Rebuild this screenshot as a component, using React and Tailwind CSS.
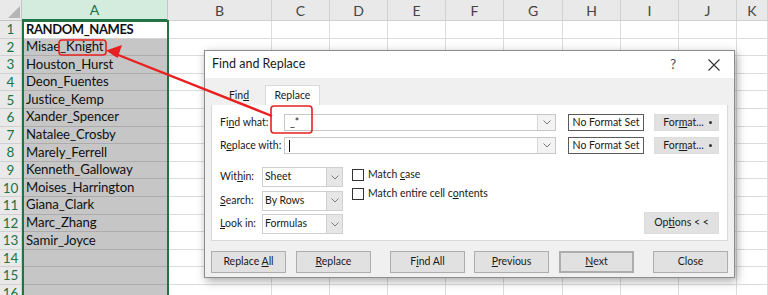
import React from "react";

const cols = ["B", "C", "D", "E", "F", "G", "H", "I", "J", "K"];
const names = [
  "RANDOM_NAMES",
  "Misae_Knight",
  "Houston_Hurst",
  "Deon_Fuentes",
  "Justice_Kemp",
  "Xander_Spencer",
  "Natalee_Crosby",
  "Marely_Ferrell",
  "Kenneth_Galloway",
  "Moises_Harrington",
  "Giana_Clark",
  "Marc_Zhang",
  "Samir_Joyce",
  "",
  "",
  "",
];

const Chevron = () => (
  <svg width="8" height="5" viewBox="0 0 8 5" fill="none">
    <path d="M0.5 0.5 L4 4 L7.5 0.5" stroke="#7a7a7a" strokeWidth="1" />
  </svg>
);

const Btn = ({ children, className = "" }) => (
  <div
    className={`flex items-center justify-center h-[22px] w-[75px] bg-[#e1e1e1] border border-[#adadad] text-[10.5px] text-[#1a1a1a] ${className}`}
  >
    <span>{children}</span>
  </div>
);

const Select = ({ value }) => (
  <div className="flex h-[20px] w-[81px] border border-[#cfcfcf] bg-white">
    <div className="flex-1 flex items-center pl-[2px] text-[10.5px] text-[#1a1a1a]">{value}</div>
    <div className="w-[16px] flex items-center justify-center bg-[#e6e6e6] border-l border-[#cfcfcf]">
      <Chevron />
    </div>
  </div>
);

const Combo = ({ children }) => (
  <div className="flex h-[17px] w-[272px] border border-[#c8c8c8] bg-white">
    <div className="flex-1 flex items-center pl-[3px] text-[10.5px] text-[#1a1a1a]">{children}</div>
    <div className="w-[18px] flex items-center justify-center bg-[#f3f3f3] border-l border-[#d6d6d6]">
      <Chevron />
    </div>
  </div>
);

const FormatRow = () => (
  <>
    <div className="ml-[12px] flex items-center justify-center h-[17px] w-[76px] bg-white border border-[#5a5a5a] text-[10.5px] text-[#1a1a1a]">
      No Format Set
    </div>
    <div className="ml-[10px] relative flex items-center justify-center h-[17px] w-[65px] bg-[#e1e1e1] border border-[#dcdcdc] text-[10.5px] text-[#1a1a1a]">
      <span className="-ml-[6px]">
        For<u>m</u>at...
      </span>
      <span className="absolute right-[6px] top-[6px] w-[3px] h-[3px] bg-[#333] rounded-full" />
    </div>
  </>
);

const Check = ({ children }) => (
  <div className="flex items-center gap-[4px] h-[12px]">
    <div className="w-[12px] h-[12px] border border-[#333] bg-white" />
    <span className="text-[10.5px] text-[#1a1a1a]">{children}</span>
  </div>
);

export default function App() {
  return (
    <div className="relative w-[768px] h-[295px] overflow-hidden bg-white font-['Lato',sans-serif]">
      {/* sheet */}
      <div className="grid grid-cols-[22px_146px_104px_58px_58px_58px_58px_59px_58px_58px_58px_1fr]">
        <div className="relative h-[21px] bg-[#e9e9e9] border-r border-b border-[#c6c6c6]">
          <svg className="absolute left-[8px] top-[6px]" width="12" height="12" viewBox="0 0 12 12">
            <path d="M12 0 L12 12 L0 12 Z" fill="#b5b5b5" />
          </svg>
        </div>
        <div className="h-[21px] flex items-center justify-center bg-[#d3ecdd] border-r border-[#c6c6c6] border-b-2 border-b-[#217346] text-[14px] text-[#217346]">
          A
        </div>
        {cols.map((c) => (
          <div
            key={c}
            className="h-[21px] flex items-center justify-center bg-[#e9e9e9] border-r border-b border-[#d0d0d0] text-[14px] text-[#444]"
          >
            {c}
          </div>
        ))}
        {names.map((n, i) => (
          <React.Fragment key={i}>
            <div className="h-[17.6px] flex items-center justify-center bg-[#e9e9e9] border-r border-b border-[#d0d0d0] text-[13.5px] text-[#217346]">
              {i + 1}
            </div>
            <div
              className={`h-[17.6px] flex items-center pl-[4px] border-b text-[#111] ${
                i === 0
                  ? "bg-white border-[#d4d4d4] font-bold text-[13px] tracking-[-0.4px]"
                  : "bg-[#c6c6c6] border-[#acacac] text-[13.2px] tracking-[-0.1px]"
              }`}
            >
              {n}
            </div>
            {cols.map((c) => (
              <div key={c} className="h-[17.6px] border-r border-b border-[#dcdcdc]" />
            ))}
          </React.Fragment>
        ))}
      </div>

      {/* column A selection */}
      <div className="absolute left-[22px] top-[20px] w-[147px] h-[290px] border-2 border-[#217346]" />

      {/* dialog */}
      <div className="absolute left-[204px] top-[50px] w-[531px] h-[228px] flex flex-col bg-[#f0f0f0] border border-[#8c8c8c] shadow-[2px_3px_9px_rgba(0,0,0,0.35)] font-['Lato',sans-serif]">
        <div className="h-[27px] flex items-center bg-white pl-[7px] pr-[14px]">
          <span className="text-[12.5px] text-[#1a1a1a]">Find and Replace</span>
          <span className="ml-auto text-[13px] text-[#444]">?</span>
          <svg className="ml-[32px]" width="12" height="12" viewBox="0 0 12 12">
            <path d="M0.5 0.5 L11.5 11.5 M11.5 0.5 L0.5 11.5" stroke="#333" strokeWidth="1.1" />
          </svg>
        </div>

        <div className="px-[6px] pt-[7px] flex flex-col">
          <div className="flex h-[20px] items-end">
            <div className="w-[54px] h-[19px] flex items-center justify-center text-[10.5px] text-[#1a1a1a]">
              <span className="ml-[2px]">
                Fin<u>d</u>
              </span>
            </div>
            <div className="w-[55px] h-[20px] flex items-center justify-center bg-white border-x border-t border-[#d9d9d9] text-[10.5px] text-[#1a1a1a]">
              Replace
            </div>
          </div>

          <div className="h-[136px] bg-white border border-[#d9d9d9] border-t-0 pl-[8px] pr-[8px] pt-[9px] flex flex-col">
            <div className="flex items-center">
              <span className="w-[64px] text-[10.5px] text-[#1a1a1a]">
                Fi<u>n</u>d what:
              </span>
              <Combo>
                <span className="ml-[2px]">_*</span>
              </Combo>
              <FormatRow />
            </div>
            <div className="flex items-center mt-[6px]">
              <span className="w-[64px] text-[10.5px] text-[#1a1a1a]">
                R<u>e</u>place with:
              </span>
              <Combo>
                <span className="w-px h-[12px] bg-[#111] ml-[1px]" />
              </Combo>
              <FormatRow />
            </div>

            <div className="flex mt-[13px]">
              <div className="flex flex-col gap-[3.5px]">
                <div className="flex items-center">
                  <span className="w-[42px] text-[10.5px] text-[#1a1a1a]">
                    Wit<u>h</u>in:
                  </span>
                  <Select value="Sheet" />
                </div>
                <div className="flex items-center">
                  <span className="w-[42px] text-[10.5px] text-[#1a1a1a]">
                    <u>S</u>earch:
                  </span>
                  <Select value="By Rows" />
                </div>
                <div className="flex items-center">
                  <span className="w-[42px] text-[10.5px] text-[#1a1a1a]">
                    <u>L</u>ook in:
                  </span>
                  <Select value="Formulas" />
                </div>
              </div>
              <div className="ml-[9px] pt-[2px] flex flex-col gap-[7px]">
                <Check>
                  Match <u>c</u>ase
                </Check>
                <Check>
                  Match entire cell c<u>o</u>ntents
                </Check>
              </div>
              <div className="ml-auto flex items-end">
                <div className="flex items-center justify-center h-[22px] w-[75px] bg-[#e1e1e1] border border-[#dcdcdc] text-[10.5px] text-[#1a1a1a]">
                  <span>
                    Op<u>t</u>ions &lt; &lt;
                  </span>
                </div>
              </div>
            </div>
          </div>

          <div className="flex mt-[10px]">
            <Btn>
              Replace <u>A</u>ll
            </Btn>
            <Btn className="ml-[10px]">
              <u>R</u>eplace
            </Btn>
            <Btn className="ml-[19px]">
              F<u>i</u>nd All
            </Btn>
            <Btn className="ml-[9px]">
              <u>P</u>revious
            </Btn>
            <Btn className="ml-[10px] border-[#0078d7] border-2">
              <u>N</u>ext
            </Btn>
            <Btn className="ml-[19px]">Close</Btn>
          </div>
        </div>
      </div>

      {/* annotation */}
      <svg className="absolute inset-0 pointer-events-none" width="768" height="295" viewBox="0 0 768 295">
        <rect x="59" y="40" width="47" height="15" rx="3" fill="none" stroke="#e8201f" strokeWidth="1.6" />
        <rect x="271" y="106" width="41" height="27" rx="3" fill="none" stroke="#e8201f" strokeWidth="1.6" />
        <line x1="117" y1="54.5" x2="272" y2="116" stroke="#e8201f" strokeWidth="2.4" />
        <path d="M106 50.5 L122 45 L117.5 58 Z" fill="#e8201f" />
      </svg>
    </div>
  );
}
